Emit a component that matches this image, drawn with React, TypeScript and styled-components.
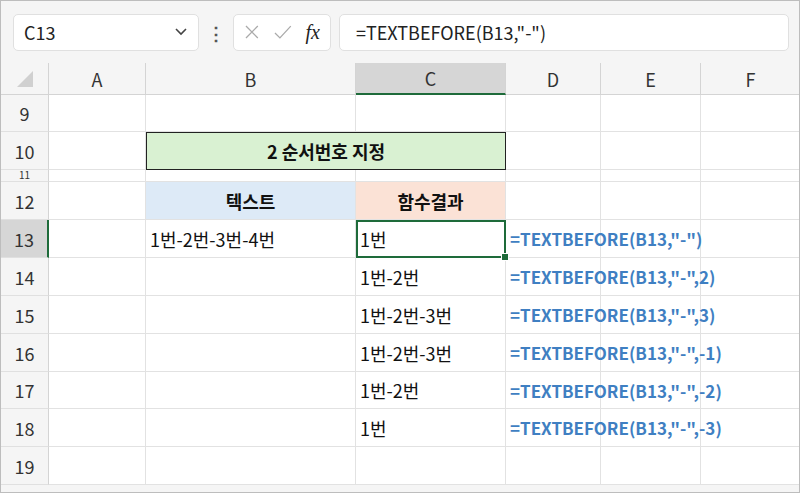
import { Fragment } from 'react';
import styled, { createGlobalStyle } from 'styled-components';

const Global = createGlobalStyle`
  body { margin: 0; font-family: "Noto Sans CJK KR", "Liberation Sans", sans-serif; }
`;

const Frame = styled.div`
  width: 800px; height: 493px; box-sizing: border-box;
  border: 1px solid #bdbdbd; background: #f5f5f5; overflow: hidden;
`;
const Toolbar = styled.div`
  height: 62px; display: flex; align-items: center; gap: 8px; padding: 0 10px 0 12px;
`;
const Box = styled.div<{ w?: number }>`
  height: 37px; ${p => (p.w ? `width:${p.w}px;` : 'flex:1;')}
  box-sizing: border-box; background: #fff; border: 1px solid #e0e0e0; border-radius: 5px;
  display: flex; align-items: center; padding: 0 10px; font-size: 18px; color: #222;
`;
const Grid = styled.div`
  display: grid;
  grid-template-columns: 48px 97px 210px 150px 95px 100px 100px;
  grid-template-rows: 32px 37px 38px 12px 38px 38px 38px 38px 38px 37px 38px 38px;
  background: #fff;
`;
const ColHead = styled.div<{ active?: boolean }>`
  background: ${p => (p.active ? '#d6d6d6' : '#f5f5f5')};
  border-bottom: ${p => (p.active ? '2px solid #1e6b3a' : '1px solid #d4d4d4')};
  border-right: 1px solid #d4d4d4; box-sizing: border-box;
  display: flex; align-items: center; justify-content: center; font-size: 18px; color: #333;
`;
const RowHead = styled.div<{ active?: boolean; small?: boolean }>`
  background: ${p => (p.active ? '#d6d6d6' : '#f5f5f5')};
  border-right: ${p => (p.active ? '2px solid #1e6b3a' : '1px solid #d4d4d4')};
  border-bottom: 1px solid #e0e0e0; box-sizing: border-box; overflow: hidden;
  display: flex; align-items: ${p => (p.small ? 'flex-start' : 'center')}; justify-content: center;
  font-size: ${p => (p.small ? 10 : 18)}px; line-height: ${p => (p.small ? '10px' : 'normal')}; color: #333;
`;
const Cell = styled.div<{ bg?: string; bold?: boolean; center?: boolean; blue?: boolean; sel?: boolean }>`
  background: ${p => p.bg || '#fff'}; box-sizing: border-box; overflow: visible; white-space: nowrap;
  border-right: 1px solid #e2e2e2; border-bottom: 1px solid #e2e2e2;
  display: flex; align-items: center; padding: 0 4px; position: relative;
  justify-content: ${p => (p.center ? 'center' : 'flex-start')};
  font-size: ${p => (p.blue ? 17 : 18)}px; font-weight: ${p => (p.bold || p.blue ? 700 : 400)};
  color: ${p => (p.blue ? '#3f7fc2' : '#111')};
  ${p => (p.blue ? 'z-index: 1; background: transparent;' : '')}
  ${p => (p.sel ? 'outline: 2px solid #1e6b3a; outline-offset: -2px; z-index: 2;' : '')}
`;
const Title = styled(Cell)`
  grid-column: span 2; border: 1.5px solid #222; background: #d9f1d2;
`;
const Handle = styled.span`
  position: absolute; right: -4px; bottom: -4px; width: 6px; height: 6px;
  background: #1e6b3a; border: 1px solid #fff;
`;

const cols = ['A', 'B', 'C', 'D', 'E', 'F'];
const results = ['1번', '1번-2번', '1번-2번-3번', '1번-2번-3번', '1번-2번', '1번'];
const formulas = ['=TEXTBEFORE(B13,"-")', '=TEXTBEFORE(B13,"-",2)', '=TEXTBEFORE(B13,"-",3)',
  '=TEXTBEFORE(B13,"-",-1)', '=TEXTBEFORE(B13,"-",-2)', '=TEXTBEFORE(B13,"-",-3)'];

const Blank = ({ n }: { n: number }) => <>{Array.from({ length: n }, (_, i) => <Cell key={i} />)}</>;

export default function App() {
  return (
    <Frame>
      <Global />
      <Toolbar>
        <Box w={186} style={{ justifyContent: 'space-between' }}>
          <span>C13</span>
          <svg width="14" height="10" viewBox="0 0 14 10"><path d="M2 2l5 5 5-5" stroke="#444" strokeWidth="1.6" fill="none" /></svg>
        </Box>
        <span style={{ color: '#555', fontSize: 18, fontWeight: 700 }}>⋮</span>
        <Box w={98} style={{ gap: 14 }}>
          <svg width="16" height="16" viewBox="0 0 16 16"><path d="M2 2l12 12M14 2L2 14" stroke="#aaa" strokeWidth="1.3" /></svg>
          <svg width="18" height="16" viewBox="0 0 18 16"><path d="M1 9l5 5L17 2" stroke="#aaa" strokeWidth="1.3" fill="none" /></svg>
          <span style={{ fontFamily: '"Liberation Serif", serif', fontStyle: 'italic', fontSize: 20 }}>fx</span>
        </Box>
        <Box style={{ paddingLeft: 16 }}>=TEXTBEFORE(B13,"-")</Box>
      </Toolbar>
      <Grid>
        <ColHead>
          <svg width="20" height="20" viewBox="0 0 20 20"><path d="M18 2v16H2z" fill="#d0d0d0" /></svg>
        </ColHead>
        {cols.map(c => <ColHead key={c} active={c === 'C'}>{c}</ColHead>)}
        <RowHead>9</RowHead><Blank n={6} />
        <RowHead>10</RowHead><Cell /><Title bold center>2 순서번호 지정</Title><Blank n={3} />
        <RowHead small>11</RowHead><Blank n={6} />
        <RowHead>12</RowHead><Cell /><Cell bg="#ddeaf7" bold center>텍스트</Cell>
        <Cell bg="#fbe2d6" bold center>함수결과</Cell><Blank n={3} />
        {results.map((r, i) => (
          <Fragment key={i}>
            <RowHead active={i === 0}>{13 + i}</RowHead>
            <Cell />
            <Cell>{i === 0 ? '1번-2번-3번-4번' : ''}</Cell>
            <Cell sel={i === 0}>{r}{i === 0 && <Handle />}</Cell>
            <Cell blue>{formulas[i]}</Cell><Cell /><Cell />
          </Fragment>
        ))}
        <RowHead>19</RowHead><Blank n={6} />
      </Grid>
    </Frame>
  );
}
